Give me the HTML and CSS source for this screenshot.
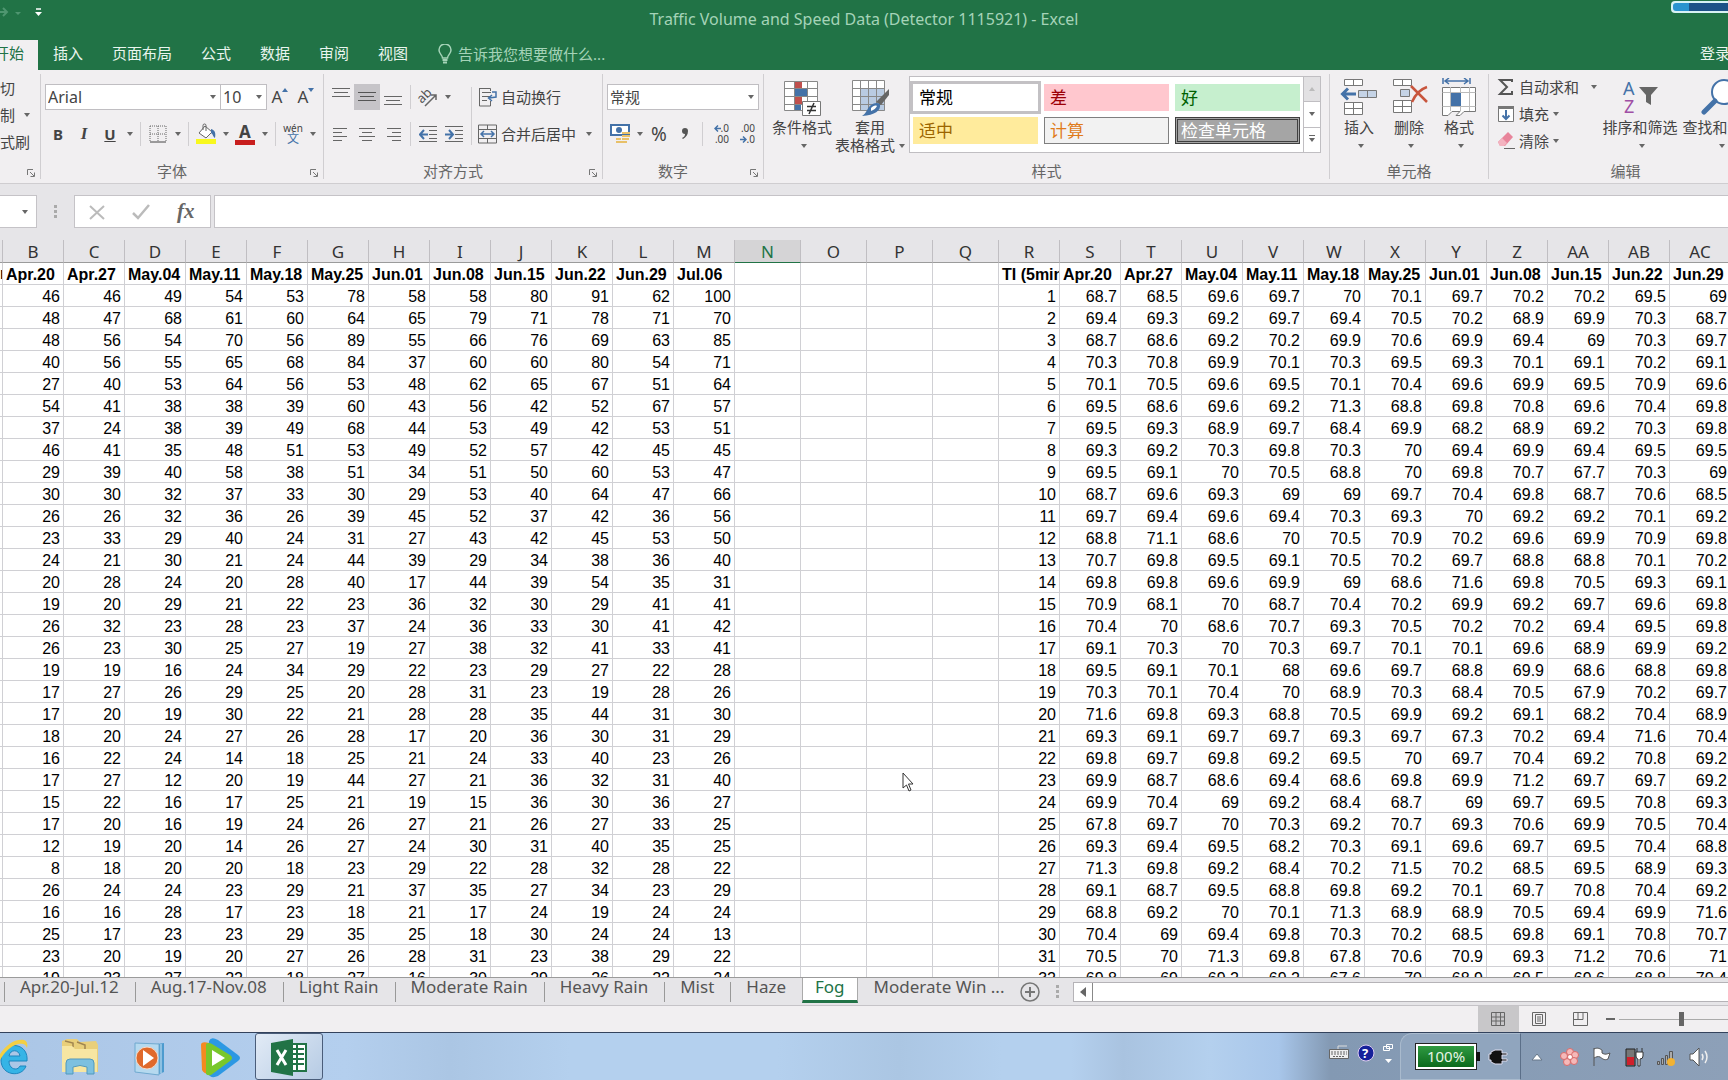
FILE: index.html
```html
<!DOCTYPE html>
<html lang="zh-CN">
<head>
    <meta charset="UTF-8">
    <meta name="viewport" content="width=device-width, initial-scale=1.0">
    <title>Traffic Volume and Speed Data (Detector 1115921) - Excel</title>
    <link rel="stylesheet" href="styles.css">
</head>
<body>
    <header class="titlebar">
        <div class="quick-access">
            <svg width="50" height="20" viewBox="0 0 50 20"><path d="M0 8h6M3 4l4 4-4 4" fill="none" stroke="#4f9670" stroke-width="2"/><path d="M15 8h6l-3 3z" fill="#4f9670"/><path d="M36 5h5" stroke="#fff" stroke-width="1.5"/><path d="M35 8h7l-3.500 4z" fill="#fff"/></svg>
        </div>
        <h1>Traffic Volume and Speed Data (Detector 1115921) - Excel</h1>
        <div class="recorder">
            <div class="recorder-bar"></div>
        </div>
        <svg class="ribbon-toggle" width="16" height="12" viewBox="0 0 16 12"><path d="M.5.5h15v10H.5zM8 9V3M5 6l3-3 3 3" fill="none" stroke="#4f9670"/></svg>
    </header>

    <nav class="tabs">
        <a href="#" class="tab active">开始</a>
        <a href="#" class="tab">插入</a>
        <a href="#" class="tab">页面布局</a>
        <a href="#" class="tab">公式</a>
        <a href="#" class="tab">数据</a>
        <a href="#" class="tab">审阅</a>
        <a href="#" class="tab">视图</a>
        <a href="#" class="tell-me">
            <svg width="14" height="20" viewBox="0 0 14 20"><path d="M4.500 14c0-3-3.500-4-3.500-8a6 6 0 0 1 12 0c0 4-3.500 5-3.500 8z" fill="none" stroke="#a5d3b8" stroke-width="1.500"/><path d="M4.500 16h5M5 18.500h4" stroke="#a5d3b8" stroke-width="2"/></svg>
            告诉我您想要做什么...
        </a>
        <a href="#" class="login">登录</a>
    </nav>

    <div class="ribbon">
        <section class="group clipboard">
            <div class="group-body lines">
                <button>切</button>
                <button>制<i class="caret"></i></button>
                <button>式刷</button>
            </div>
            <button class="launcher" aria-label="剪贴板设置"><svg width="8" height="8" viewBox="0 0 8 8"><path d="M.5 6V.5H6M3 3l4 4M7.500 3.500v4h-4" fill="none" stroke="#777"/></svg></button>
        </section>

        <section class="group font">
            <div class="group-body">
                <div class="row combos">
                    <div class="combo name"><select aria-label="字体"><option>Arial</option></select></div>
                    <div class="combo size"><select aria-label="字号"><option>10</option></select></div>
                    <button class="tool grow" aria-label="增大字号">A<svg width="6" height="4" viewBox="0 0 6 4"><path d="M0 4l3-4 3 4z" fill="#4472a8"/></svg></button>
                    <button class="tool grow" aria-label="减小字号">A<svg width="6" height="4" viewBox="0 0 6 4"><path d="M0 0h6L3 4z" fill="#4472a8"/></svg></button>
                </div>
                <div class="row">
                    <button class="tool bold">B</button>
                    <button class="tool italic">I</button>
                    <button class="tool underline">U</button>
                    <button class="drop" aria-label="下划线"><i class="caret"></i></button>
                    <i class="sep"></i>
                    <button class="tool" aria-label="边框"><svg width="18" height="18" viewBox="0 0 18 18"><path d="M1 1h16M1 9h16M1 1v15M9 1v15M17 1v15" fill="none" stroke="#666" stroke-dasharray="1 1"/><path d="M1 17h16" stroke="#444"/></svg></button>
                    <button class="drop" aria-label="边框样式"><i class="caret"></i></button>
                    <i class="sep"></i>
                    <button class="tool" aria-label="填充颜色"><svg width="22" height="22" viewBox="0 0 22 22"><path d="M10 3l7 6-6 6-7-5z" fill="#fff" stroke="#666"/><path d="M8 7V2.500a1.500 1.500 0 0 1 3 0V8" fill="none" stroke="#666"/><path d="M16 6c4 1 5 4 4 9-2-1-2-4-4-5z" fill="#4472a8"/><path d="M1 16h20v5H1z" fill="#f8f81e"/></svg></button>
                    <button class="drop" aria-label="选择填充颜色"><i class="caret"></i></button>
                    <button class="tool font-color" aria-label="字体颜色">A</button>
                    <button class="drop" aria-label="选择字体颜色"><i class="caret"></i></button>
                    <i class="sep"></i>
                    <button class="tool pinyin"><span>wén</span><b>文</b></button>
                    <button class="drop" aria-label="拼音选项"><i class="caret"></i></button>
                </div>
            </div>
            <h2>字体</h2>
            <button class="launcher" aria-label="字体设置"><svg width="8" height="8" viewBox="0 0 8 8"><path d="M.5 6V.5H6M3 3l4 4M7.500 3.500v4h-4" fill="none" stroke="#777"/></svg></button>
        </section>

        <section class="group align">
            <div class="group-body split">
                <div>
                    <div class="row">
                        <button class="tool" aria-label="顶端对齐"><svg width="18" height="22" viewBox="0 0 18 22"><path d="M0 2.500h18M2 6.500h14M0 10.500h18" stroke="#666"/></svg></button>
                        <button class="tool on" aria-label="垂直居中"><svg width="18" height="22" viewBox="0 0 18 22"><path d="M0 6.500h18M2 10.500h14M0 14.500h18" stroke="#555"/></svg></button>
                        <button class="tool" aria-label="底端对齐"><svg width="18" height="22" viewBox="0 0 18 22"><path d="M0 10.500h18M2 14.500h14M0 18.500h18" stroke="#666"/></svg></button>
                        <i class="sep"></i>
                        <button class="tool" aria-label="方向"><svg width="22" height="22" viewBox="0 0 22 22"><text x="1" y="13" font-size="13" fill="#555" transform="rotate(-45 9 11)">ab</text><path d="M8 20L19 9M14 9h5v5" fill="none" stroke="#666" stroke-width="1.500"/></svg></button>
                        <button class="drop" aria-label="方向选项"><i class="caret"></i></button>
                    </div>
                    <div class="row">
                        <button class="tool" aria-label="左对齐"><svg width="16" height="14" viewBox="0 0 16 14"><path d="M0 1.500h14M0 5.500h9M0 9.500h14M0 13.500h9" stroke="#666"/></svg></button>
                        <button class="tool" aria-label="居中"><svg width="16" height="14" viewBox="0 0 16 14"><path d="M0 1.500h16M3 5.500h10M0 9.500h16M3 13.500h10" stroke="#666"/></svg></button>
                        <button class="tool" aria-label="右对齐"><svg width="16" height="14" viewBox="0 0 16 14"><path d="M2 1.500h14M7 5.500h9M2 9.500h14M7 13.500h9" stroke="#666"/></svg></button>
                        <i class="sep"></i>
                        <button class="tool" aria-label="减少缩进"><svg width="18" height="18" viewBox="0 0 18 18"><path d="M0 1.500h18M10 5.500h8M10 9.500h8M10 13.500h8M0 16.500h18" stroke="#666"/><path d="M9 9.500H2M5 5L1 9.500 5 14" fill="none" stroke="#4472a8" stroke-width="2"/></svg></button>
                        <button class="tool" aria-label="增加缩进"><svg width="18" height="18" viewBox="0 0 18 18"><path d="M0 1.500h18M10 5.500h8M10 9.500h8M10 13.500h8M0 16.500h18" stroke="#666"/><path d="M0 9.500h7M4 5l4 4.500L4 14" fill="none" stroke="#4472a8" stroke-width="2"/></svg></button>
                    </div>
                </div>
                <i class="sep tall"></i>
                <div>
                    <div class="row">
                        <button class="wide"><svg width="20" height="20" viewBox="0 0 20 20"><path d="M1.500 1v18h11v-5M1.500 1.500h11V4M4 5.500h9M4 9.500h8M4 13.500h5" fill="none" stroke="#666"/><path d="M14 5h4v5l-7 1M14 8l-3.500 3 3.500 3" fill="none" stroke="#4472a8" stroke-width="1.500"/></svg>自动换行</button>
                    </div>
                    <div class="row">
                        <button class="wide"><svg width="20" height="20" viewBox="0 0 20 20"><path d="M.5 1h18v18H.5zM.5 5.500h18M.5 14.500h18M9.500 1v4M9.500 15v4" fill="none" stroke="#666"/><path d="M3 10h13M6 7l-3 3 3 3M13 7l3 3-3 3" fill="none" stroke="#4472a8" stroke-width="1.500"/></svg>合并后居中</button>
                        <button class="drop" aria-label="合并选项"><i class="caret"></i></button>
                    </div>
                </div>
            </div>
            <h2>对齐方式</h2>
            <button class="launcher" aria-label="对齐设置"><svg width="8" height="8" viewBox="0 0 8 8"><path d="M.5 6V.5H6M3 3l4 4M7.500 3.500v4h-4" fill="none" stroke="#777"/></svg></button>
        </section>

        <section class="group number">
            <div class="group-body">
                <div class="row combos">
                    <div class="combo format"><select aria-label="数字格式"><option>常规</option></select></div>
                </div>
                <div class="row">
                    <button class="tool" aria-label="会计数字格式"><svg width="22" height="22" viewBox="0 0 22 22"><path d="M1 1h20v12H1z" fill="#4472a8"/><path d="M3 3h16v8H3z" fill="#fff"/><circle cx="10" cy="7" r="3" fill="#4472a8"/><path d="M13 10h8M13 13h8M13 16h7M7 16h5M7 19h11" stroke="#e8c068" stroke-width="2"/></svg></button>
                    <button class="drop" aria-label="货币"><i class="caret"></i></button>
                    <button class="tool percent">%</button>
                    <button class="tool" aria-label="千位分隔"><svg width="8" height="12" viewBox="0 0 8 12"><path d="M1 3a3 3 0 0 1 6 0c0 4-2 6-5 8l-1-1c2-1 3-2 3-4C2 6 1 5 1 3z" fill="#555"/></svg></button>
                    <i class="sep"></i>
                    <button class="tool decimals"><span><svg width="7" height="7" viewBox="0 0 7 7"><path d="M7 3.500H1M4 .5l-3 3 3 3" fill="none" stroke="#4472a8" stroke-width="1.500"/></svg>.0</span><span>.00</span></button>
                    <button class="tool decimals"><span>.00</span><span><svg width="7" height="7" viewBox="0 0 7 7"><path d="M0 3.500h6M3 .5l3 3-3 3" fill="none" stroke="#4472a8" stroke-width="1.500"/></svg>.0</span></button>
                </div>
            </div>
            <h2>数字</h2>
            <button class="launcher" aria-label="数字设置"><svg width="8" height="8" viewBox="0 0 8 8"><path d="M.5 6V.5H6M3 3l4 4M7.500 3.500v4h-4" fill="none" stroke="#777"/></svg></button>
        </section>

        <section class="group styles">
            <div class="group-body big-row">
                <button class="big">
                    <svg width="38" height="38" viewBox="0 0 38 38"><path d="M1.500 3h33v30h-33z" fill="#fff"/><path d="M12 3h7v7h-7zM12 19h7v7h-7z" fill="#c0504d"/><path d="M12 11h12v7H12zM12 27h6v6h-6z" fill="#4472a8"/><path d="M1.500 3.500h33v29h-33zM1.500 10.500h33M1.500 18.500h33M1.500 26.500h33M11.500 3v30M24.500 3v30" fill="none" stroke="#888"/><path d="M19.500 23.500h18v14h-18z" fill="#fff" stroke="#777"/><path d="M24 28.500h9M24 32.500h9M31 25l-5 11" stroke="#333" stroke-width="1.500"/></svg>
                    <span>条件格式</span>
                    <span><i class="caret"></i></span>
                </button>
                <button class="big">
                    <svg width="38" height="38" viewBox="0 0 38 38"><path d="M1.500 2.500h32v30h-32z" fill="#fff"/><path d="M10 11h24v22H10z" fill="#b9cbe2"/><path d="M1.500 2.500h32v30h-32zM1.500 10.500h32M1.500 18.500h32M1.500 26.500h32M9.500 2v31M17.500 2v31M25.500 2v31" fill="none" stroke="#888"/><path d="M38 11v6l-8 10-5-3z" fill="#666"/><path d="M29 26c1 7-5 11-18 12 5-3 5-8 9-11 3-2 6-3 9-1z" fill="#4472a8"/><path d="M20 30c2-2 4-3 6-2-1 2-3 4-6 5z" fill="#fff"/></svg>
                    <span>套用</span>
                    <span>表格格式<i class="caret"></i></span>
                </button>
                <div class="gallery">
                    <div class="swatches">
                        <button class="swatch normal">常规</button>
                        <button class="swatch bad">差</button>
                        <button class="swatch good">好</button>
                        <button class="swatch neutral">适中</button>
                        <button class="swatch calc">计算</button>
                        <button class="swatch check">检查单元格</button>
                    </div>
                    <div class="gallery-scroll">
                        <button disabled aria-label="上一行"><i class="caret up"></i></button>
                        <button aria-label="下一行"><i class="caret"></i></button>
                        <button class="more" aria-label="其他"><i class="caret"></i></button>
                    </div>
                </div>
            </div>
            <h2>样式</h2>
        </section>

        <section class="group cells">
            <div class="group-body big-row">
                <button class="big">
                    <svg width="38" height="38" viewBox="0 0 38 38"><path d="M4.500 1.500h18v6h-18zM13.500 1.500v6M4.500 24.500h18v12h-18zM4.500 30.500h18M13.500 24.500v12" fill="#fff" stroke="#777"/><path d="M18.500 12.500h18v7h-18zM27.500 12.500v7" fill="#c5d3e6" stroke="#777"/><path d="M16 16H3M8 10.500L2.500 16 8 21.500" fill="none" stroke="#4472a8" stroke-width="3"/></svg>
                    <span>插入</span>
                    <span><i class="caret"></i></span>
                </button>
                <button class="big">
                    <svg width="38" height="38" viewBox="0 0 38 38"><path d="M3.500 1.500h18v6h-18zM12.500 1.500v6M3.500 22.500h18v12h-18zM3.500 28.500h18M12.500 22.500v12" fill="#fff" stroke="#777"/><path d="M10.500 11.500h9v7h-9z" fill="#c5d3e6" stroke="#777"/><path d="M21 8l16 16M37 9C31 11 25 17 22 24" fill="none" stroke="#c8553d" stroke-width="2.500"/></svg>
                    <span>删除</span>
                    <span><i class="caret"></i></span>
                </button>
                <button class="big">
                    <svg width="38" height="38" viewBox="0 0 38 38"><path d="M3 0v6M30 0v6M5 3h23M9 0L5 3l4 3M24 0l4 3-4 3" fill="none" stroke="#4472a8" stroke-width="1.500"/><path d="M2.500 9.500h33v24H24l-4 4h-4l4-4h-8l-4 4H2.500z" fill="#fff" stroke="#777"/><path d="M2.500 14.500h33M2.500 28.500h33M10.500 9v24M20.500 9v24M29.500 9v24" stroke="#bbb"/><path d="M11 15h10v13H11z" fill="#4472a8"/></svg>
                    <span>格式</span>
                    <span><i class="caret"></i></span>
                </button>
            </div>
            <h2>单元格</h2>
        </section>

        <section class="group editing">
            <div class="group-body big-row">
                <div class="lines">
                    <button><svg width="18" height="18" viewBox="0 0 18 18"><path d="M15 4V2H3l7 7-7 7h12v-3" fill="none" stroke="#555" stroke-width="2"/></svg>自动求和<i class="caret far"></i></button>
                    <button><svg width="18" height="18" viewBox="0 0 18 18"><path d="M1.500 1.500h15v15h-15z" fill="#fff" stroke="#777"/><path d="M1 1h16v3H1z" fill="#777"/><path d="M9 5v9M5.500 10.500L9 14l3.500-3.500" fill="none" stroke="#4472a8" stroke-width="2"/></svg>填充<i class="caret"></i></button>
                    <button><svg width="18" height="18" viewBox="0 0 18 18"><path d="M11 0l5 5-8 9H3l-2-4z" fill="#e8849a"/><path d="M5 6l5 5-3 3H3l-2-4z" fill="#f3b3c0"/><path d="M7 16.500h11" stroke="#666"/></svg>清除<i class="caret"></i></button>
                </div>
                <button class="big">
                    <svg width="38" height="38" viewBox="0 0 38 38"><text x="2" y="17" font-size="18" fill="#4472a8">A</text><text x="3" y="35" font-size="18" fill="#a04fa5">Z</text><path d="M18 9h19l-7 8v10l-5-3v-7z" fill="#666"/></svg>
                    <span>排序和筛选</span>
                    <span><i class="caret"></i></span>
                </button>
                <button class="big">
                    <svg width="38" height="38" viewBox="0 0 38 38"><circle cx="23" cy="14" r="12" fill="#fff" stroke="#4472a8" stroke-width="2"/><path d="M14 23L3 34" stroke="#4472a8" stroke-width="5" stroke-linecap="round"/></svg>
                    <span>查找和选择</span>
                    <span><i class="caret"></i></span>
                </button>
            </div>
            <h2>编辑</h2>
        </section>
    </div>

    <div class="formula-bar">
        <button class="name-box" aria-label="名称框"><i class="caret"></i></button>
        <svg class="grip" width="4" height="16" viewBox="0 0 4 16"><path d="M1 1h3v3H1zM1 6h3v3H1zM1 11h3v3H1z" fill="#aaa"/></svg>
        <div class="formula-tools">
            <button aria-label="取消"><svg width="16" height="16" viewBox="0 0 16 16"><path d="M1 2l14 13M15 2L1 15" stroke="#bbb" stroke-width="2"/></svg></button>
            <button aria-label="输入"><svg width="18" height="16" viewBox="0 0 18 16"><path d="M1 9l5 5L17 1" fill="none" stroke="#bbb" stroke-width="2.500"/></svg></button>
            <button class="fx">fx</button>
        </div>
        <input type="text" class="formula" aria-label="编辑栏">
    </div>

    <main class="sheet">
        <table id="grid"></table>
        <svg class="cursor" width="12" height="20" viewBox="0 0 12 20"><path d="M1 1v15l3.500-3 2.500 6 2-1-2.500-6H11z" fill="#fff" stroke="#333"/></svg>
    </main>

    <div class="sheet-bar">
        <nav class="sheet-tabs">
            <a href="#">Apr.20-Jul.12</a>
            <a href="#">Aug.17-Nov.08</a>
            <a href="#">Light Rain</a>
            <a href="#">Moderate Rain</a>
            <a href="#">Heavy Rain</a>
            <a href="#">Mist</a>
            <a href="#">Haze</a>
            <a href="#" class="current">Fog</a>
            <a href="#" class="last">Moderate Win ...</a>
        </nav>
        <button class="add-sheet" aria-label="新工作表"><svg width="20" height="20" viewBox="0 0 20 20"><circle cx="10" cy="10" r="9" fill="none" stroke="#777" stroke-width="1.500"/><path d="M5 10h10M10 5v10" stroke="#777" stroke-width="2"/></svg></button>
        <svg class="grip" width="4" height="16" viewBox="0 0 4 16"><path d="M1 1h3v3H1zM1 6h3v3H1zM1 11h3v3H1z" fill="#aaa"/></svg>
        <div class="hscroll">
            <button aria-label="向左滚动"><svg width="6" height="10" viewBox="0 0 6 10"><path d="M6 0v10L0 5z" fill="#666"/></svg></button>
        </div>
    </div>

    <footer class="status">
        <button class="view on" aria-label="普通"><svg width="15" height="14" viewBox="0 0 15 14"><path d="M.5.5h13v13H.5zM.5 5h13M.5 9h13M5 .5v13M9.500.5v13" fill="none" stroke="#666"/></svg></button>
        <button class="view" aria-label="页面布局"><svg width="15" height="14" viewBox="0 0 15 14"><path d="M.5.5h13v13H.5zM3.500 2.500h7v9h-7zM5 5h4M5 7h4M5 9h4" fill="none" stroke="#666"/></svg></button>
        <button class="view" aria-label="分页预览"><svg width="15" height="14" viewBox="0 0 15 14"><path d="M.5.5h14v13H.5zM5 .5v7M10 .5v7M.5 7.500H10" fill="none" stroke="#666"/></svg></button>
        <button class="zoom-out" aria-label="缩小"></button>
        <input type="range" class="zoom" min="0" max="100" value="50" aria-label="显示比例">
    </footer>

    <div class="taskbar">
        <div class="apps">
            <button aria-label="Internet Explorer"><svg width="42" height="42" viewBox="0 0 42 42"><path d="M40 25H22c0 9 9 10 11 5h6c-4 12-25 10-25-6 0-20 28-19 26 1zM22 20h11c-1-7-10-7-11 0z" fill="#35b4e6" stroke="#1c86bf"/><path d="M10 25C14 12 27 2 37 4c3 1 4 4 3 8-1-4-4-5-9-4-8 2-15 10-19 18z" fill="#f3cf43"/></svg></button>
            <button aria-label="资源管理器"><svg width="42" height="42" viewBox="0 0 42 42"><path d="M3 5l5-2h10l3 3 16-1 2 4v27H3z" fill="#e9cf7a"/><path d="M6 5l8 2v4M18 6l8 3v4" fill="none" stroke="#a08550" stroke-width="1.500"/><path d="M3 10h10l3 3h22v23H3z" fill="#f7e6a2"/><path d="M7 38V27q0-4 4-4h20q4 0 4 4v11h-7v-7q-7-3-14 0v7z" fill="#7cc0e0" stroke="#5199bd"/></svg></button>
            <button aria-label="媒体播放器"><svg width="42" height="42" viewBox="0 0 42 42"><path d="M28 8l7-1v29l-7 3z" fill="#4d9bce"/><path d="M6 7l24 1v31L6 36z" fill="#b5d9ef" stroke="#6fa9cf"/><path d="M32 8v29" stroke="#cfe6f5"/><circle cx="18" cy="22" r="11" fill="#e0692b" stroke="#f6d9c8"/><path d="M14 14l11 8-11 8z" fill="#fff"/></svg></button>
            <button aria-label="视频"><svg width="42" height="42" viewBox="0 0 42 42"><path d="M10 5q2-5 9-1l20 15q4 3 0 6L19 40q-7 3-10-2z" fill="#2c98e3"/><path d="M2 9q0-4 8-2v31q-5 0-7-4z" fill="#f58a1f"/><path d="M7 8q3-2 6 0l18 11q4 3 0 6L12 39q-3 1-5-1z" fill="#79c72b"/><path d="M13 14l13 8-13 8z" fill="#fff"/></svg></button>
            <button class="running" aria-label="Excel"><svg width="42" height="42" viewBox="0 0 42 42"><path d="M22 8h16v27H22z" fill="#fff" stroke="#217346" stroke-width="2"/><path d="M23 13h13M23 18h13M23 23h13M23 28h13M29 9v25" stroke="#217346" stroke-width="2"/><path d="M3 7l22-4v37L3 36z" fill="#217346"/><path d="M9 14l9 15M18 14L9 29" stroke="#fff" stroke-width="3"/></svg></button>
        </div>
        <div class="language">
            <svg width="20" height="16" viewBox="0 0 20 16"><path d="M.5 5.500h19v9H.5z" fill="#eee" stroke="#666"/><path d="M2 8h16M2 10h16M4 12.500h12" stroke="#666" stroke-dasharray="2 1"/><path d="M9 5V2h9" fill="none" stroke="#ddd"/></svg>
            <svg width="18" height="18" viewBox="0 0 18 18"><circle cx="9" cy="9" r="8" fill="#16209a" stroke="#dce"/><text x="5" y="14" font-size="13" font-weight="bold" fill="#fff">?</text></svg>
            <svg width="10" height="20" viewBox="0 0 10 20"><path d="M3.500.5h6v4h-6zM.5 2.500h6v4h-6z" fill="none" stroke="#fff"/><path d="M2 15h7l-3.500 4z" fill="#fff"/></svg>
        </div>
        <div class="power">
            <div class="battery">100%</div>
            <svg width="20" height="16" viewBox="0 0 20 16"><path d="M1 5h2V3l4-2h7v3h5v2h-5v4h5v2h-5v3H7l-4-2v-2H1z" fill="#111" stroke="#dde"/></svg>
        </div>
        <div class="tray">
            <svg width="12" height="8" viewBox="0 0 12 8"><path d="M6 1l5 6H1z" fill="#fff" stroke="#678"/></svg>
            <svg width="20" height="20" viewBox="0 0 20 20"><g fill="#f5b9b9" stroke="#d86a6a"><circle cx="10" cy="5" r="3.500"/><circle cx="15" cy="8" r="3.500"/><circle cx="14" cy="14" r="3.500"/><circle cx="7" cy="15" r="3.500"/><circle cx="4" cy="9" r="3.500"/></g><circle cx="10" cy="10" r="2.500" fill="#fff" stroke="#d86a6a"/></svg>
            <svg width="20" height="22" viewBox="0 0 20 22"><path d="M2 2v18M2 3c4-2 6 0 8 1v3c3 2 5 1 8 0l-2 6c-4 2-6-1-8-2-2-1-4 0-6 1" fill="#fff" stroke="#555"/></svg>
            <svg width="20" height="22" viewBox="0 0 20 22"><path d="M2 3h9v17H2z" fill="#777" stroke="#222"/><path d="M3 11h7v8H3z" fill="#d0202c"/><path d="M12 6h7v4q0 3-3 3v7h-2v-7q-2 0-2-3zM13 2v4M18 2v4" fill="#fff" stroke="#333"/></svg>
            <svg width="20" height="20" viewBox="0 0 20 20"><path d="M1.500 14.500h2v3h-2zM5.500 11.500h2v6h-2zM9.500 8.500h2v9h-2zM13.500 4.500h3v13h-3z" fill="#aaa" stroke="#555"/><circle cx="15" cy="15" r="4" fill="#f2b233"/></svg>
            <svg width="22" height="22" viewBox="0 0 22 22"><path d="M2 8h3l6-6v18l-6-6H2z" fill="#fff" stroke="#555"/><path d="M14 8q2 3 0 6M17 5q4 6 0 12" fill="none" stroke="#eee" stroke-width="1.500"/></svg>
        </div>
    </div>

    <script src="sheet.js"></script>
</body>
</html>
```
FILE: styles.css
```css
* {
    box-sizing: border-box;
}
body {
    margin: 0;
    height: 100vh;
    display: flex;
    flex-direction: column;
    overflow: hidden;
    font-family: "Noto Sans", "Noto Sans CJK SC", sans-serif;
    font-size: 15px;
    color: #444;
    background: #e6e5e8;
}
button {
    font: inherit;
    color: inherit;
    background: none;
    border: none;
    padding: 0;
    white-space: nowrap;
}
a {
    color: inherit;
    text-decoration: none;
    white-space: nowrap;
}
svg {
    display: block;
    flex: none;
}
h1, h2 {
    margin: 0;
    font-weight: normal;
}
.caret {
    display: inline-block;
    flex: none;
    border: 3px solid transparent;
    border-top: 4px solid #666;
    border-bottom: none;
}
.caret.up {
    border-top: none;
    border-bottom: 4px solid #bbb;
}

/* title bar */
.titlebar {
    position: relative;
    height: 40px;
    flex: none;
    background: #217346;
    color: #a5d3b8;
    text-align: center;
}
.titlebar h1 {
    font-size: 16px;
    line-height: 38px;
}
.quick-access {
    position: absolute;
    left: 0;
    top: 4px;
}
.recorder {
    position: absolute;
    right: 0;
    top: 1px;
    width: 57px;
    height: 12px;
    padding: 2px 0 2px 2px;
    background: #d8f2f5;
    border-radius: 4px 0 0 4px;
}
.recorder-bar {
    height: 8px;
    border-radius: 3px 0 0 3px;
    background: linear-gradient(90deg, #2a93cf 16px, #1d5288 16px);
}
.ribbon-toggle {
    position: absolute;
    right: 12px;
    top: 9px;
    z-index: -1;
}

/* ribbon tabs */
.tabs {
    display: flex;
    height: 30px;
    flex: none;
    overflow: hidden;
    background: #217346;
    color: #e9f5ee;
    line-height: 26px;
}
.tab {
    padding: 0 15px 0 14px;
}
.tab.active {
    width: 38px;
    margin-right: 1px;
    padding: 0;
    text-indent: -6px;
    background: #f1eff1;
    color: #217346;
}
.tell-me {
    display: flex;
    align-items: center;
    gap: 6px;
    height: 28px;
    margin-left: 15px;
    color: #a5d3b8;
}
.login {
    width: 28px;
    margin-left: auto;
}

/* ribbon */
.ribbon {
    display: flex;
    height: 114px;
    flex: none;
    padding: 4px 0;
    overflow: hidden;
    background: #f1eff1;
    border-bottom: 1px solid #cfcdd0;
}
.group {
    position: relative;
    display: flex;
    flex-direction: column;
    flex: none;
    border-right: 1px solid #d0ced1;
}
.group h2 {
    margin-top: auto;
    font-size: 15px;
    line-height: 16px;
    text-align: center;
    color: #666;
}
.font h2, .align h2, .number h2 {
    padding-right: 20px;
}
.clipboard {
    width: 41px;
}
.font {
    width: 283px;
}
.align {
    width: 279px;
}
.number {
    width: 161px;
}
.styles {
    width: 566px;
}
.cells {
    width: 159px;
}
.editing {
    width: 274px;
}
.group-body {
    padding: 10px 0 0 4px;
}
.launcher {
    position: absolute;
    right: 5px;
    bottom: 2px;
}
.row {
    display: flex;
    align-items: center;
    height: 26px;
    margin-bottom: 11px;
}
.split {
    display: flex;
}
.sep {
    width: 1px;
    height: 24px;
    margin: 0 4px;
    background: #d0ced1;
}
.sep.tall {
    height: 58px;
    margin-top: 3px;
}
.tool {
    display: flex;
    align-items: center;
    justify-content: center;
    width: 26px;
    height: 26px;
    flex: none;
}
.tool.on {
    background: #c6c4c8;
}
.drop {
    display: flex;
    align-items: center;
    justify-content: center;
    width: 13px;
    height: 26px;
}
.wide {
    display: flex;
    align-items: center;
    gap: 3px;
    padding: 0 6px 0 2px;
    line-height: 20px;
}
.combo {
    position: relative;
    height: 26px;
    background: #fff;
    border: 1px solid #c0bec2;
}
.combo::after {
    content: "";
    position: absolute;
    right: 4px;
    top: 10px;
    border: 3px solid transparent;
    border-top: 4px solid #666;
    border-bottom: none;
    pointer-events: none;
}
.combo select {
    width: 100%;
    height: 24px;
    padding: 0 2px;
    border: none;
    background: none;
    appearance: none;
    font: inherit;
    font-size: 16px;
    color: inherit;
}
.combo.name {
    width: 176px;
}
.combo.size {
    width: 46px;
    border-left: none;
}
.combo.format {
    width: 152px;
}
.combo.format select {
    font-size: 15px;
}
.grow {
    font-size: 17px;
    align-items: flex-start;
    line-height: 26px;
}
.grow svg {
    margin-top: 4px;
}
.bold {
    font-weight: bold;
}
.italic {
    font: italic bold 17px "Liberation Serif", serif;
}
.underline {
    font-weight: bold;
    text-decoration: underline;
}
.font-color {
    height: 22px;
    font-size: 17px;
    line-height: 16px;
    font-weight: bold;
    background: linear-gradient(#c81e1e, #c81e1e) center bottom / 20px 5px no-repeat;
    padding-bottom: 5px;
}
.pinyin {
    flex-direction: column;
    font-size: 10px;
    line-height: 10px;
}
.pinyin b {
    font-weight: normal;
    font-size: 12px;
    line-height: 12px;
    color: #4472a8;
}
.percent {
    font-size: 19px;
}
.decimals {
    flex-direction: column;
    align-items: flex-end;
    padding-right: 4px;
    font-size: 10px;
    line-height: 11px;
}
.decimals span {
    display: flex;
    align-items: center;
}

.big-row {
    display: flex;
    padding-top: 2px;
}
.big {
    display: flex;
    flex-direction: column;
    align-items: center;
    width: 68px;
    padding-top: 2px;
    line-height: 18px;
}
.big svg {
    margin-bottom: 2px;
}
.big span {
    height: 18px;
}
.big .caret {
    margin: 0 0 3px 4px;
}
.cells .big {
    width: 50px;
}
.editing .big {
    width: 80px;
}
.lines button {
    display: flex;
    align-items: center;
    gap: 4px;
    height: 27px;
    line-height: 20px;
}
.lines .caret.far {
    margin-left: 8px;
}
.clipboard .lines {
    padding: 0;
}
.clipboard .lines button {
    gap: 9px;
}
.editing .lines {
    width: 107px;
    padding-left: 4px;
    margin-top: -3px;
}

.gallery {
    display: flex;
    width: 412px;
    height: 77px;
    margin-left: 5px;
    background: #fff;
    border: 1px solid #c0bec2;
}
.swatches {
    flex: 1;
    display: grid;
    grid-template-columns: 125px 125px 125px;
    grid-auto-rows: 27px;
    gap: 6px;
    padding: 7px 0 0 3px;
}
.swatch {
    padding-left: 6px;
    font-size: 17px;
    line-height: 24px;
    text-align: left;
}
.normal {
    color: #000;
    box-shadow: 0 0 0 3px #c3c1c4;
}
.bad {
    background: #ffc7ce;
    color: #9c0006;
}
.good {
    background: #c6efce;
    color: #006100;
}
.neutral {
    background: #ffeb9c;
    color: #9c6500;
}
.calc {
    padding-left: 5px;
    background: #f2f2f2;
    border: 1px solid #7f7f7f;
    color: #e07b1a;
}
.check {
    padding-left: 3px;
    background: #a5a5a5;
    border: 3px double #3f3f3f;
    line-height: 20px;
    color: #fff;
}
.gallery-scroll {
    display: flex;
    flex-direction: column;
    width: 17px;
    border-left: 1px solid #c0bec2;
}
.gallery-scroll button {
    display: flex;
    align-items: center;
    justify-content: center;
    flex: 1;
    border-bottom: 1px solid #c0bec2;
}
.gallery-scroll button:disabled {
    background: #e2e1e3;
}
.gallery-scroll button:last-child {
    border-bottom: none;
}
.more::before {
    content: "";
    position: absolute;
    width: 6px;
    margin-bottom: 8px;
    border-top: 1px solid #666;
}

/* formula bar */
.formula-bar {
    display: flex;
    align-items: center;
    height: 56px;
    flex: none;
    padding-bottom: 1px;
}
.name-box {
    display: flex;
    align-items: center;
    justify-content: flex-end;
    width: 37px;
    height: 33px;
    padding-right: 8px;
    background: #fff;
    border: 1px solid #c5c3c7;
    border-left: none;
}
.formula-bar .grip {
    margin: 0 17px 0 16px;
}
.formula-tools {
    display: flex;
    width: 137px;
    height: 33px;
    padding-right: 2px;
    background: #fff;
    border: 1px solid #c5c3c7;
}
.formula-tools button {
    display: flex;
    align-items: center;
    justify-content: center;
    flex: 1;
}
.formula-tools .fx {
    font: italic bold 21px "Liberation Serif", serif;
    color: #666;
}
.formula {
    flex: 1;
    height: 33px;
    margin-left: 3px;
    border: 1px solid #c5c3c7;
    border-right: none;
    background: #fff;
}

/* grid */
.sheet {
    position: relative;
    flex: 1;
    min-height: 0;
    overflow: hidden;
    background: #fff;
}
table {
    table-layout: fixed;
    width: 0;
    border-spacing: 0;
    font: 16px "Liberation Sans", Arial, sans-serif;
    color: #000;
}
col {
    width: 61px;
}
col.edge {
    width: 3px;
}
col.blank {
    width: 66px;
}
thead th {
    height: 23px;
    padding: 2px 0 0;
    background: #e6e5e8;
    border-right: 1px solid #c0bec2;
    border-bottom: 1px solid #9b9b9b;
    font: 17px/20px "Noto Sans", sans-serif;
    color: #333;
}
thead th.selected {
    background: #d5d4d6;
    border-bottom-color: #217346;
    color: #217346;
}
td {
    height: 22px;
    padding: 3px 3px 0;
    border-right: 1px solid #d0d0d4;
    border-bottom: 1px solid #d0d0d4;
    line-height: 18px;
    text-align: right;
    white-space: nowrap;
    overflow: hidden;
}
td:first-child {
    padding: 0;
}
td.label {
    font-weight: bold;
    text-align: left;
}
.cursor {
    position: absolute;
    left: 902px;
    top: 532px;
}

/* sheet tabs */
.sheet-bar {
    display: flex;
    height: 29px;
    flex: none;
    align-items: center;
    border-top: 1px solid #9b9b9b;
    border-bottom: 1px solid #c5c3c7;
}
.sheet-tabs {
    display: flex;
    align-self: flex-start;
    height: 25px;
    padding-left: 4px;
    font-size: 17px;
    line-height: 18px;
    color: #555;
}
.sheet-tabs a {
    padding: 0 16px;
    background: linear-gradient(#999, #999) left 4px / 1px 20px no-repeat;
}
.sheet-tabs a.current {
    padding: 0 12px;
    background: #fff;
    border: 1px solid #aaa;
    border-top: none;
    border-bottom: 3px solid #217346;
    color: #217346;
}
.sheet-tabs a.last {
    background: none;
}
.sheet-bar .grip {
    margin: 0 14px 0 15px;
}
.hscroll {
    flex: 1;
    height: 20px;
    background: #fff;
    border: 1px solid #b5b3b7;
    border-right: none;
}
.hscroll button {
    display: flex;
    align-items: center;
    justify-content: center;
    width: 19px;
    height: 18px;
    border-right: 1px solid #888;
}

/* status bar */
.status {
    display: flex;
    justify-content: flex-end;
    align-items: center;
    height: 26px;
    flex: none;
    overflow: hidden;
    background: #f1eff1;
}
.view {
    display: flex;
    align-items: center;
    justify-content: center;
    width: 41px;
    height: 26px;
}
.view.on {
    background: #c8c7c9;
}
.zoom-out {
    width: 9px;
    height: 2px;
    margin: 0 4px 0 5px;
    background: #666;
}
.zoom {
    width: 125px;
    height: 20px;
    flex: none;
    margin: 0 -16px 0 0;
    appearance: none;
    background: linear-gradient(#aaa, #aaa) center / 100% 1px no-repeat;
}
.zoom::-webkit-slider-thumb {
    appearance: none;
    width: 5px;
    height: 14px;
    background: #666;
}

/* windows taskbar */
.taskbar {
    display: flex;
    height: 48px;
    flex: none;
    border-top: 1px solid #33425c;
    background: linear-gradient(90deg, #abc6e6, #b4cfee 20%, #abc6e4 26%, #b4d0ee 33%, #b4d0ee 45%, #abc6e3 52%, #b4d0ee 58%, #b4d0ee 62%, #a9c3e0 65%, #b4d0ee 70%, #a8c6ea 74%, #8399b3 77%, #8da0b8);
}
.apps {
    display: flex;
    flex: 1;
}
.apps button {
    display: flex;
    align-items: center;
    justify-content: center;
    width: 70px;
}
.apps button:first-child {
    justify-content: flex-end;
    width: 45px;
    padding-right: 16px;
}
.apps .running {
    width: 68px;
    border: 1px solid #4a5d7a;
    border-radius: 3px;
    background: linear-gradient(135deg, #e2ebf6, #b6cbe4);
}
.language {
    display: flex;
    gap: 8px;
    padding: 11px 7px 0 0;
}
.power {
    display: flex;
    align-items: center;
    gap: 12px;
    width: 121px;
    padding-left: 15px;
    background: #90a5be;
    border: 1px solid #a9bacd;
    border-right-color: #5b6f89;
    border-radius: 12px 0 0 0;
}
.battery {
    position: relative;
    width: 60px;
    height: 25px;
    border: 2px solid #fff;
    outline: 1px solid #222;
    background: linear-gradient(#2f9a42, #0b6a1c);
    color: #e6f5e6;
    line-height: 20px;
    text-align: center;
}
.battery::after {
    content: "";
    position: absolute;
    right: -6px;
    top: 6px;
    width: 4px;
    height: 9px;
    background: #111;
}
.tray {
    display: flex;
    align-items: center;
    gap: 12px;
    padding: 0 18px 0 10px;
}
.tray svg:first-child {
    margin-right: 5px;
}
```
FILE: sheet.js
```js
const dates = ['Apr.20', 'Apr.27', 'May.04', 'May.11', 'May.18', 'May.25', 'Jun.01', 'Jun.08', 'Jun.15', 'Jun.22', 'Jun.29', 'Jul.06'];

// Columns B-M, traffic volume
const volume = `
46 46 49 54 53 78 58 58 80 91 62 100
48 47 68 61 60 64 65 79 71 78 71 70
48 56 54 70 56 89 55 66 76 69 63 85
40 56 55 65 68 84 37 60 60 80 54 71
27 40 53 64 56 53 48 62 65 67 51 64
54 41 38 38 39 60 43 56 42 52 67 57
37 24 38 39 49 68 44 53 49 42 53 51
46 41 35 48 51 53 49 52 57 42 45 45
29 39 40 58 38 51 34 51 50 60 53 47
30 30 32 37 33 30 29 53 40 64 47 66
26 26 32 36 26 39 45 52 37 42 36 56
23 33 29 40 24 31 27 43 42 45 53 50
24 21 30 21 24 44 39 29 34 38 36 40
20 28 24 20 28 40 17 44 39 54 35 31
19 20 29 21 22 23 36 32 30 29 41 41
26 32 23 28 23 37 24 36 33 30 41 42
26 23 30 25 27 19 27 38 32 41 33 41
19 19 16 24 34 29 22 23 29 27 22 28
17 27 26 29 25 20 28 31 23 19 28 26
17 20 19 30 22 21 28 28 35 44 31 30
18 20 24 27 26 28 17 20 36 30 31 29
16 22 24 14 18 25 21 24 33 40 23 26
17 27 12 20 19 44 27 21 36 32 31 40
15 22 16 17 25 21 19 15 36 30 36 27
17 20 16 19 24 26 27 21 26 27 33 25
12 19 20 14 26 27 24 30 31 40 35 25
8 18 20 20 18 23 29 22 28 32 28 22
26 24 24 23 29 21 37 35 27 34 23 29
16 16 28 17 23 18 21 17 24 19 24 24
25 17 23 23 29 35 25 18 30 24 24 13
23 20 19 20 27 26 28 31 23 38 29 22
19 23 27 22 18 27 16 30 29 26 22 24`;

// Columns S-AC, speed
const speed = `
68.7 68.5 69.6 69.7 70 70.1 69.7 70.2 70.2 69.5 69
69.4 69.3 69.2 69.7 69.4 70.5 70.2 68.9 69.9 70.3 68.7
68.7 68.6 69.2 70.2 69.9 70.6 69.9 69.4 69 70.3 69.7
70.3 70.8 69.9 70.1 70.3 69.5 69.3 70.1 69.1 70.2 69.1
70.1 70.5 69.6 69.5 70.1 70.4 69.6 69.9 69.5 70.9 69.6
69.5 68.6 69.6 69.2 71.3 68.8 69.8 70.8 69.6 70.4 69.8
69.5 69.3 68.9 69.7 68.4 69.9 68.2 68.9 69.2 70.3 69.8
69.3 69.2 70.3 69.8 70.3 70 69.4 69.9 69.4 69.5 69.5
69.5 69.1 70 70.5 68.8 70 69.8 70.7 67.7 70.3 69
68.7 69.6 69.3 69 69 69.7 70.4 69.8 68.7 70.6 68.5
69.7 69.4 69.6 69.4 70.3 69.3 70 69.2 69.2 70.1 69.2
68.8 71.1 68.6 70 70.5 70.9 70.2 69.6 69.9 70.9 69.8
70.7 69.8 69.5 69.1 70.5 70.2 69.7 68.8 68.8 70.1 70.2
69.8 69.8 69.6 69.9 69 68.6 71.6 69.8 70.5 69.3 69.1
70.9 68.1 70 68.7 70.4 70.2 69.9 69.2 69.7 69.6 69.8
70.4 70 68.6 70.7 69.3 70.5 70.2 70.2 69.4 69.5 69.8
69.1 70.3 70 70.3 69.7 70.1 70.1 69.6 68.9 69.9 69.2
69.5 69.1 70.1 68 69.6 69.7 68.8 69.9 68.6 68.8 69.8
70.3 70.1 70.4 70 68.9 70.3 68.4 70.5 67.9 70.2 69.7
71.6 69.8 69.3 68.8 70.5 69.9 69.2 69.1 68.2 70.4 68.9
69.3 69.1 69.7 69.7 69.3 69.7 67.3 70.2 69.4 71.6 70.4
69.8 69.7 69.8 69.2 69.5 70 69.7 70.4 69.2 70.8 69.2
69.9 68.7 68.6 69.4 68.6 69.8 69.9 71.2 69.7 69.7 69.2
69.9 70.4 69 69.2 68.4 68.7 69 69.7 69.5 70.8 69.3
67.8 69.7 70 70.3 69.2 70.7 69.3 70.6 69.9 70.5 70.4
69.3 69.4 69.5 68.2 70.3 69.1 69.6 69.7 69.5 70.4 68.8
71.3 69.8 69.2 68.4 70.2 71.5 70.2 68.5 69.5 68.9 69.3
69.1 68.7 69.5 68.8 69.8 69.2 70.1 69.7 70.8 70.4 69.2
68.8 69.2 70 70.1 71.3 68.9 68.9 70.5 69.4 69.9 71.6
70.4 69 69.4 69.8 70.3 70.2 68.5 69.8 69.1 70.8 70.7
70.5 70 71.3 69.8 67.8 70.6 70.9 69.3 71.2 70.6 71
69.8 69 69.2 69.2 67.6 70 68.9 69.5 69.6 68.8 70.4`;

const letters = ['', ...'BCDEFGHIJKLMNOPQRSTUVWXYZ', 'AA', 'AB', 'AC'];
const parse = text => text.trim().split('\n').map(line => line.split(' '));
const speedRows = parse(speed);
const blank = ['', '', '', ''];

function row(values, cls) {
    return '<tr>' + values.map(v => `<td${cls}>${v}</td>`).join('') + '</tr>';
}

let html = '<colgroup>' + letters.map(l =>
    `<col${l === '' ? ' class="edge"' : 'NOPQ'.includes(l) ? ' class="blank"' : ''}>`).join('') + '</colgroup>';
html += '<thead><tr>' + letters.map(l =>
    `<th${l === 'N' ? ' class="selected"' : ''}>${l}</th>`).join('') + '</tr></thead><tbody>';
html += row(['r', ...dates, ...blank, 'TI (5min)', ...dates.slice(0, 11)], ' class="label"');
parse(volume).forEach((values, i) => {
    html += row(['', ...values, ...blank, i + 1, ...speedRows[i]], '');
});
document.getElementById('grid').innerHTML = html + '</tbody>';
```
